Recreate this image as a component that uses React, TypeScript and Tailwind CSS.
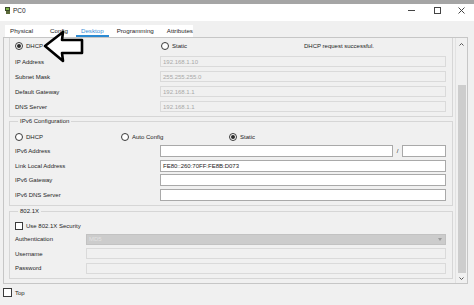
import React from "react";

const Radio: React.FC<{ checked?: boolean }> = ({ checked }) => (
  <span className="w-[8px] h-[8px] rounded-full border border-[#3a3a3a] bg-white flex items-center justify-center shrink-0">
    {checked && <span className="w-[4px] h-[4px] rounded-full bg-[#2a2a2a]" />}
  </span>
);

const Check: React.FC = () => (
  <span className="w-[8px] h-[8px] border border-[#3a3a3a] bg-white shrink-0" />
);

const Row: React.FC<{ label: string; children: React.ReactNode; tall?: boolean }> = ({ label, children, tall }) => (
  <div className={`flex items-center ${tall ? "h-[15px]" : "h-[14.5px]"}`}>
    <div className="w-[145px] shrink-0">{label}</div>
    {children}
  </div>
);

const Disabled: React.FC<{ value?: string }> = ({ value }) => (
  <div className="w-[286px] h-[11px] border border-[#dadada] bg-[#f0f0f0] text-[#a8a8a8] pl-[2px] flex items-center">
    {value}
  </div>
);

const Field: React.FC<{ value?: string; w?: string }> = ({ value, w }) => (
  <div className={`${w ?? "w-[286px]"} h-[12px] border border-[#a9a9a9] bg-white text-[#222] pl-[2px] flex items-center`}>
    {value}
  </div>
);

const App: React.FC = () => {
  const tabs = ["Physical", "Config", "Desktop", "Programming", "Attributes"];

  return (
    <div
      className="relative w-[474px] h-[305px] overflow-hidden bg-[#f0f0f0] text-[6px] leading-[8px] text-[#1e1e1e] flex flex-col"
      style={{ fontFamily: '"Liberation Sans", Arial, sans-serif' }}
    >
      <div className="h-[4px] bg-[#a5a5a5] shrink-0" />

      {/* title bar */}
      <div className="h-[17px] bg-white shrink-0">
        <div className="h-[13px] flex items-center">
          <svg className="ml-[5px] w-[6px] h-[7px]" viewBox="0 0 6 7">
            <rect x="0" y="0" width="5" height="4" fill="#3b4a2a" />
            <rect x="1" y="1" width="3" height="2" fill="#7fb24a" />
            <rect x="1" y="4" width="4" height="3" fill="#5c6b3a" />
          </svg>
          <span className="ml-[2px] text-[6.5px]">PC0</span>
          <div className="ml-auto flex items-center">
            <span className="w-[7px] h-[1px] bg-[#444]" />
            <span className="ml-[19px] w-[7px] h-[7px] border border-[#444]" />
            <svg className="ml-[17px] mr-[9px] w-[7px] h-[7px]" viewBox="0 0 7 7">
              <path d="M0.5 0.5 L6.5 6.5 M6.5 0.5 L0.5 6.5" stroke="#444" strokeWidth="1" />
            </svg>
          </div>
        </div>
      </div>

      {/* tabs */}
      <div className="h-[4px] shrink-0" />
      <div className="h-[12px] shrink-0 flex">
        <div className="ml-[5px] w-[188px] bg-white flex items-center text-[6.2px]">
          {tabs.map((t) => (
            <div
              key={t}
              className={`h-full flex items-center ${
                t === "Desktop" ? "px-[5px] text-[#3d8fd6] border-b-2 border-[#2b8ad2] pt-[2px]" : "px-[5px]"
              } ${t === "Physical" ? "pl-[5px] pr-[12px]" : ""} ${t === "Config" ? "pr-[8px]" : ""} ${
                t === "Programming" ? "px-[8px]" : ""
              }`}
            >
              {t}
            </div>
          ))}
        </div>
      </div>

      {/* panel */}
      <div className="ml-[3px] w-[465px] h-[247px] shrink-0 border border-[#c6c6c6] flex">
        <div className="flex-1 pl-[5px] flex flex-col">
          {/* IPv4 */}
          <div className="w-[444px] border-x border-b border-[#d6d6d6] pl-[5px] pb-[2px]">
            <div className="h-[16px] flex items-center">
              <div className="w-[145px] flex items-center">
                <Radio checked />
                <span className="ml-[3px]">DHCP</span>
              </div>
              <div className="w-[144px] flex items-center pl-[1px]">
                <Radio />
                <span className="ml-[3px]">Static</span>
              </div>
              <span>DHCP request successful.</span>
            </div>
            <Row label="IP Address" tall>
              <Disabled value="192.168.1.10" />
            </Row>
            <Row label="Subnet Mask" tall>
              <Disabled value="255.255.255.0" />
            </Row>
            <Row label="Default Gateway" tall>
              <Disabled value="192.168.1.1" />
            </Row>
            <Row label="DNS Server" tall>
              <Disabled value="192.168.1.1" />
            </Row>
          </div>

          {/* IPv6 */}
          <fieldset className="w-[444px] border border-[#d6d6d6] pl-[5px] pb-[3px]">
            <legend className="ml-[3px] px-[2px] leading-[8px]">IPv6 Configuration</legend>
            <div className="mt-[3px] h-[16px] pt-[1px] flex items-center">
              <div className="w-[106px] flex items-center">
                <Radio />
                <span className="ml-[3px]">DHCP</span>
              </div>
              <div className="w-[108px] flex items-center">
                <Radio />
                <span className="ml-[3px]">Auto Config</span>
              </div>
              <div className="flex items-center">
                <Radio checked />
                <span className="ml-[3px]">Static</span>
              </div>
            </div>
            <Row label="IPv6 Address">
              <Field w="w-[233px]" />
              <span className="w-[9px] text-center">/</span>
              <Field w="w-[44px]" />
            </Row>
            <Row label="Link Local Address">
              <Field value="FE80::260:70FF:FE8B:D073" />
            </Row>
            <Row label="IPv6 Gateway">
              <Field />
            </Row>
            <Row label="IPv6 DNS Server">
              <Field />
            </Row>
          </fieldset>

          {/* 802.1X */}
          <fieldset className="mt-[1px] w-[444px] border border-[#d6d6d6] pl-[5px] pb-[2px]">
            <legend className="ml-[3px] px-[2px] leading-[8px]">802.1X</legend>
            <div className="h-[17px] pt-[5px] flex items-center">
              <Check />
              <span className="ml-[3px]">Use 802.1X Security</span>
            </div>
            <div className="h-[14.5px] flex items-center">
              <div className="w-[71px] shrink-0">Authentication</div>
              <div className="w-[360px] h-[11px] bg-[#cccccc] border border-[#c2c2c2] flex items-center pl-[2px] text-[#e2e2e2]">
                MD5
                <svg className="ml-auto mr-[3px] w-[4px] h-[3px]" viewBox="0 0 4 3">
                  <path d="M0 0 L4 0 L2 3 Z" fill="#9a9a9a" />
                </svg>
              </div>
            </div>
            <div className="h-[14.5px] flex items-center">
              <div className="w-[71px] shrink-0">Username</div>
              <div className="w-[360px] h-[11px] border border-[#dadada] bg-[#f0f0f0]" />
            </div>
            <div className="h-[14.5px] flex items-center">
              <div className="w-[71px] shrink-0">Password</div>
              <div className="w-[360px] h-[11px] border border-[#dadada] bg-[#f0f0f0]" />
            </div>
          </fieldset>
        </div>

        {/* scrollbar */}
        <div className="w-[12px] shrink-0 border-l border-[#e2e2e2] flex flex-col items-center">
          <div className="h-[12px] flex items-center justify-center">
            <svg className="w-[5px] h-[3px]" viewBox="0 0 5 3">
              <path d="M0.5 2.5 L2.5 0.5 L4.5 2.5" stroke="#555" strokeWidth="1" fill="none" />
            </svg>
          </div>
          <div className="flex-1 w-full flex justify-center">
            <div className="mt-[35px] w-[8px] h-[188px] bg-[#cdcdcd]" />
          </div>
          <div className="h-[10px] flex items-center justify-center">
            <svg className="w-[5px] h-[3px]" viewBox="0 0 5 3">
              <path d="M0.5 0.5 L2.5 2.5 L4.5 0.5" stroke="#555" strokeWidth="1" fill="none" />
            </svg>
          </div>
        </div>
      </div>

      {/* bottom */}
      <div className="flex items-center mt-[4px] ml-[3px]">
        <span className="w-[9px] h-[9px] border border-[#3a3a3a] bg-white" />
        <span className="ml-[3px]">Top</span>
      </div>

      {/* annotation arrow */}
      <svg className="absolute left-0 top-0 pointer-events-none" width="474" height="305" viewBox="0 0 474 305">
        <polygon
          points="45,46 63,32 62,40 82,40 82,53 62,53 63,61"
          fill="white"
          stroke="black"
          strokeWidth="2.6"
          strokeLinejoin="round"
        />
      </svg>
    </div>
  );
};

export default App;
